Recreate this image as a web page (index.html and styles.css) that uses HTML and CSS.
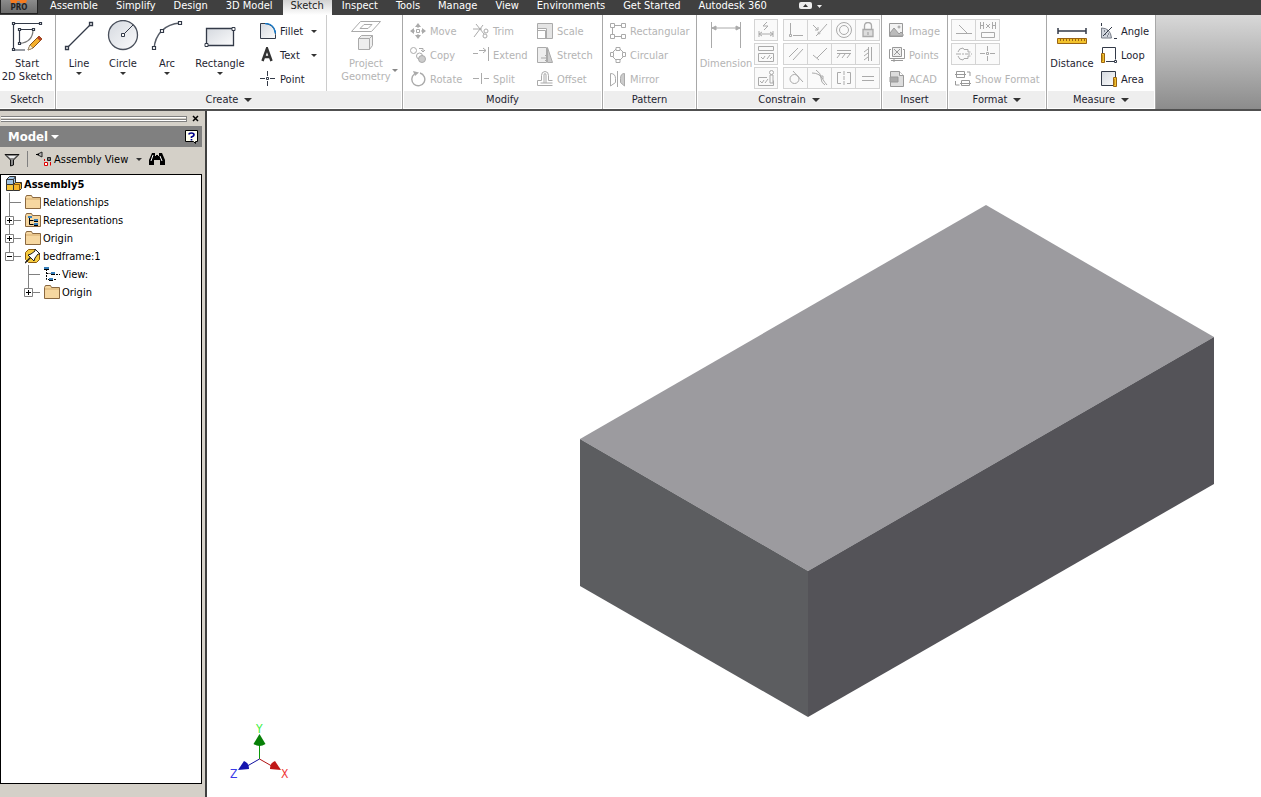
FILE: index.html
```
<!DOCTYPE html>
<html lang="en">
<head>
    <meta charset="UTF-8">
    <meta name="viewport" content="width=device-width, initial-scale=1.0">
    <title>Assembly5</title>
    <link rel="stylesheet" href="styles.css">
</head>
<body>

<nav class="tabs">
    <button class="app-button"><svg width="18" height="4" viewBox="0 0 18 4"><path d="M0 0h17l-1 3h-6v-2H7v2H1z" fill="#f47b20"/></svg>PRO</button>
    <button class="tab">Assemble</button>
    <button class="tab">Simplify</button>
    <button class="tab">Design</button>
    <button class="tab">3D Model</button>
    <button class="tab active">Sketch</button>
    <button class="tab">Inspect</button>
    <button class="tab">Tools</button>
    <button class="tab">Manage</button>
    <button class="tab">View</button>
    <button class="tab">Environments</button>
    <button class="tab">Get Started</button>
    <button class="tab">Autodesk 360</button>
    <button class="collapse" aria-label="Minimize ribbon"><svg width="24" height="8" viewBox="0 0 24 8"><rect width="13" height="7" rx="2" fill="#eee"/><path d="M4 5h5L6.500 2z" fill="#333"/><path d="M18 3h5l-2.500 3z" fill="#eee"/></svg></button>
</nav>

<div class="ribbon">
    <section class="panel panel-sketch">
        <div class="tools">
            <button class="big">
                <svg width="32" height="32" viewBox="0 0 32 32"><g fill="none" stroke="#333a48" stroke-width="1.200"><path d="M29 3.500H2.500V30H14M8.500 24V9.500H22"/><path d="M22 9.500c0 8-4 13-13.500 14" stroke="#777"/><g fill="#fff"><path d="M1.500 2.500h2v2h-2zM28.500 2.500h2v2h-2zM1.500 28.500h2v2h-2zM7.500 8.500h2v2h-2zM21.500 8.500h2v2h-2zM7.500 22.500h2v2h-2z"/></g></g><path d="M17 30l2-5 9-9 3 3-9 9z" fill="#f4b02c" stroke="#8b5315"/><path d="M26 18l2-2 3 3-2 2z" fill="#b4432a"/><path d="M17 30l2-5 3 3z" fill="#fff0c8" stroke="#777" stroke-width=".5"/></svg>
                <span>Start<br>2D Sketch</span>
            </button>
        </div>
        <h2>Sketch</h2>
    </section>

    <section class="panel panel-create">
        <div class="tools">
            <button class="big narrow">
                <svg width="32" height="32" viewBox="0 0 32 32"><g fill="#fff" stroke="#333a48" stroke-width="1.300"><path d="M4 28L28 4"/><path d="M2.500 26.500h3v3h-3zM26.500 2.500h3v3h-3z"/></g></svg>
                <span>Line</span><i class="arrow"></i>
            </button>
            <button class="big narrow">
                <svg width="32" height="32" viewBox="0 0 32 32"><defs><linearGradient id="shade" x2="1" y2="1"><stop stop-color="#d5d9df"/><stop offset="1" stop-color="#fbfbfc"/></linearGradient></defs><circle cx="16" cy="15" r="14.500" fill="url(#shade)" stroke="#4a505c" stroke-width="1.300"/><path d="M17 14l9-9" stroke="#333a48"/><path d="M14.500 13.500h3v3h-3z" fill="#fff" stroke="#333a48"/></svg>
                <span>Circle</span><i class="arrow"></i>
            </button>
            <button class="big narrow">
                <svg width="32" height="32" viewBox="0 0 32 32"><path d="M3 29C4 14 14 4 29 3" fill="none" stroke="#555b66" stroke-width="1.500"/><g fill="#fff" stroke="#333a48" stroke-width="1.200"><path d="M1.500 26.500h3v3h-3zM9.500 9.500h3v3h-3zM27.500 1.500h3v3h-3z"/></g></svg>
                <span>Arc</span><i class="arrow"></i>
            </button>
            <button class="big wide">
                <svg width="32" height="32" viewBox="0 0 32 32"><path d="M2.500 8.500h27v17h-27z" fill="url(#shade)" stroke="#333a48" stroke-width="1.300"/><path d="M1 23.500h3v3H1zM28 7.500h3v3h-3z" fill="#fff" stroke="#333a48"/></svg>
                <span>Rectangle</span><i class="arrow"></i>
            </button>
            <div class="stack stack-draw">
                <button class="small"><svg width="16" height="16" viewBox="0 0 16 16"><path d="M.500.500h5c6 1 10 5 10 11v4H.500z" fill="url(#shade)" stroke="#333a48"/><path d="M5 .500c6 0 10 4 10.500 10" fill="none" stroke="#1578c8" stroke-width="1.500"/></svg><span>Fillet</span><i class="arrow"></i></button>
                <button class="small"><svg width="16" height="16" viewBox="0 0 16 16"><path d="M2.500 14L7 1.500 11.500 14M4.500 10h6" fill="none" stroke="#333" stroke-width="2.500"/></svg><span>Text</span><i class="arrow"></i></button>
                <button class="small"><svg width="16" height="16" viewBox="0 0 16 16"><path d="M7.500 0v5M7.500 10v5M0 7.500h5M10 7.500h5M6.500 6.500h2v2h-2z" fill="none" stroke="#333a48"/></svg><span>Point</span></button>
            </div>
            <div class="project">
                <button class="big" disabled>
                    <svg width="32" height="32" viewBox="0 0 32 32" fill="none" stroke="#aaa"><path d="M1.500 11.500l9-10h20l-9 10zM10 8.500l4-4h8l-4 4z"/><path d="M8.500 18.500l3-3h11v10l-3 4h-11z" fill="#eee"/><path d="M8.500 18.500h11l3-3M19.500 18.500v11"/></svg>
                    <span>Project<br>Geometry</span>
                </button>
                <i class="arrow"></i>
            </div>
        </div>
        <h2>Create <i class="arrow large"></i></h2>
    </section>

    <section class="panel panel-modify">
        <div class="tools">
            <div class="stack">
                <button class="small" disabled><svg width="16" height="16" viewBox="0 0 16 16" fill="none" stroke="#aaa"><path d="M6.500 6.500h3v3h-3zM8 2v3M8 11v3M2 8h3M11 8h3"/><path d="M5 4l3-4 3 4zM5 12l3 4 3-4zM4 5L0 8l4 3zM12 5l4 3-4 3z" fill="#aaa" stroke="none"/></svg><span>Move</span></button>
                <button class="small" disabled><svg width="16" height="16" viewBox="0 0 16 16" fill="none" stroke="#aaa"><circle cx="3.500" cy="3.500" r="3"/><circle cx="9.500" cy="9" r="3"/><circle cx="12" cy="12" r="3.500" fill="#ccc"/><path d="M9 1.500h4V5M11 3l2 2 2-2"/></svg><span>Copy</span></button>
                <button class="small" disabled><svg width="16" height="16" viewBox="0 0 16 16" fill="none" stroke="#aaa" stroke-width="1.400"><path d="M4.500 3A6.500 6.500 0 1 0 10 2"/><path d="M3 0l6 1.500L5 5z" fill="#aaa" stroke="none"/></svg><span>Rotate</span></button>
            </div>
            <div class="stack stack-trim">
                <button class="small" disabled><svg width="16" height="16" viewBox="0 0 16 16" fill="none" stroke="#aaa"><path d="M0 6h9M3 1l8 10M1 14L10 2"/><circle cx="13" cy="8" r="2"/><circle cx="12" cy="13" r="2"/></svg><span>Trim</span></button>
                <button class="small" disabled><svg width="16" height="16" viewBox="0 0 16 16" fill="none" stroke="#aaa"><path d="M0 6.500h5M6 3.500h7M10 1l3 2.500L10 6M15.500 0v14"/></svg><span>Extend</span></button>
                <button class="small" disabled><svg width="16" height="16" viewBox="0 0 16 16" fill="none" stroke="#aaa"><path d="M0 7.500h6M8.500 2v11M11 7.500h5"/></svg><span>Split</span></button>
            </div>
            <div class="stack stack-scale">
                <button class="small" disabled><svg width="16" height="16" viewBox="0 0 16 16" fill="none" stroke="#aaa"><path d="M.500.500h15v15H.500zM.500 5.500h9v10"/><path d="M1 1h14v14h-5V5H1z" fill="#e4e4e4" stroke="none"/><path d="M.500 7.500h8v8h-8z"/></svg><span>Scale</span></button>
                <button class="small" disabled><svg width="16" height="16" viewBox="0 0 16 16" stroke="#aaa"><path d="M10.500.500l5 15h-5z" fill="#ccc"/><path d="M.500.500h9v15h-9z" fill="#eee"/><path d="M4 11h7M8 8l3 3-3 3" fill="none"/></svg><span>Stretch</span></button>
                <button class="small" disabled><svg width="16" height="16" viewBox="0 0 16 16" fill="none" stroke="#aaa"><path d="M15.500 14.500H.500V9.500h4v-5q0-4 3.500-4t3.500 4v5h4M15.500 12H3.500M7 12V4q0-1.500 1-1.500T9 4v8"/></svg><span>Offset</span></button>
            </div>
        </div>
        <h2>Modify</h2>
    </section>

    <section class="panel panel-pattern">
        <div class="tools">
            <div class="stack">
                <button class="small" disabled><svg width="16" height="16" viewBox="0 0 16 16" fill="none" stroke="#aaa"><path d="M.500.500h4v4h-4zM11.500.500h4v4h-4zM.500 11.500h4v4h-4zM11.500 11.500h4v4h-4zM5 2.500h6M2.500 5v6M5 13.500h6"/></svg><span>Rectangular</span></button>
                <button class="small" disabled><svg width="16" height="16" viewBox="0 0 16 16" fill="none" stroke="#aaa"><path d="M6 .500h4v3H6zM6 12.500h4v3H6zM.500 5.500h3v4h-3zM12.500 5.500h3v4h-3zM3 5l3-3M10 2l3 3M3 10l3 3M13 10l-3 3"/></svg><span>Circular</span></button>
                <button class="small" disabled><svg width="16" height="16" viewBox="0 0 16 16" stroke="#aaa"><path d="M.500 15V2.500q5 0 5 5v4L.500 15" fill="none"/><path d="M14.500 15V2.500q-4 0-4 5v4l4 3.500" fill="#ccc"/><path d="M7.500 0v16"/></svg><span>Mirror</span></button>
            </div>
        </div>
        <h2>Pattern</h2>
    </section>

    <section class="panel panel-constrain">
        <div class="tools">
            <button class="big dimension" disabled>
                <svg width="32" height="32" viewBox="0 0 32 32" stroke="#aaa" fill="#aaa"><path d="M1.500 2v26M30.500 2v26M2 8h28"/><path d="M2 8l4-2v4zM30 8l-4-2v4z"/></svg>
                <span>Dimension</span>
            </button>
            <div class="cells one">
                <button disabled aria-label="Automatic dimensions"><svg width="16" height="16" viewBox="0 0 16 16" fill="none" stroke="#aaa"><path d="M1 9v6M15 9v6M1 12h14M4 10l-3 2 3 2M12 10l3 2-3 2M9 0L5 4h5L6 8"/></svg></button>
                <button disabled aria-label="Show constraints"><svg width="16" height="16" viewBox="0 0 16 16" fill="none" stroke="#aaa"><path d="M.500.500h15v4H.500zM.500 7.500h15v8H.500zM3 11l2 2 2-3M9 13l3-4M12 13l2-2"/></svg></button>
                <button disabled aria-label="Constraint settings"><svg width="16" height="16" viewBox="0 0 16 16" fill="none" stroke="#aaa"><path d="M9 7.500H.500v8h15v-5M2 11l2 2 2-3M7 13l3-4M12 13V5h3v8z"/><circle cx="13.500" cy="2.500" r="2"/></svg></button>
            </div>
            <div class="cells four">
                <button disabled aria-label="Coincident"><svg width="16" height="16" viewBox="0 0 16 16" fill="none" stroke="#aaa"><path d="M2.500 1v11M5 13.500h10M1.500 12.500h2v2h-2z"/></svg></button>
                <button disabled aria-label="Collinear"><svg width="16" height="16" viewBox="0 0 16 16" fill="none" stroke="#aaa"><path d="M1 3l5 5M6 5v3H3M4 14l3-3M8 10l7-8"/><circle cx="7" cy="11" r="1"/></svg></button>
                <button disabled aria-label="Concentric"><svg width="16" height="16" viewBox="0 0 16 16" fill="none" stroke="#aaa"><circle cx="8" cy="8" r="7.500"/><circle cx="8" cy="8" r="4.500"/></svg></button>
                <button disabled aria-label="Fix"><svg width="16" height="16" viewBox="0 0 16 16" fill="none" stroke="#aaa" stroke-width="1.300"><path d="M4.500 7V4q0-3.500 3.500-3.500T11.500 4v3"/><path d="M3 7.500h10v7H3z" fill="#ddd"/><path d="M8 10v3"/></svg></button>
                <button disabled aria-label="Parallel"><svg width="16" height="16" viewBox="0 0 16 16" stroke="#aaa"><path d="M1 11L10 2M5 14L15 3"/></svg></button>
                <button disabled aria-label="Perpendicular"><svg width="16" height="16" viewBox="0 0 16 16" stroke="#aaa" fill="none"><path d="M1 9l6 5M5 12L15 2"/></svg></button>
                <button disabled aria-label="Horizontal"><svg width="16" height="16" viewBox="0 0 16 16" stroke="#aaa"><path d="M1 4.500h14M1 7.500h14M4 8l-3 4M9 8l-3 4M14 8l-3 4"/></svg></button>
                <button disabled aria-label="Vertical"><svg width="16" height="16" viewBox="0 0 16 16" stroke="#aaa"><path d="M8.500 1v14M11.500 1v14M8 3L4 6M8 7l-4 3M8 11l-4 3"/></svg></button>
                <button disabled aria-label="Tangent"><svg width="16" height="16" viewBox="0 0 16 16" fill="none" stroke="#aaa"><circle cx="6.500" cy="9" r="4.500"/><path d="M5 1l10 11"/></svg></button>
                <button disabled aria-label="Smooth"><svg width="16" height="16" viewBox="0 0 16 16" fill="none" stroke="#aaa"><path d="M0 3q7 0 10 5t5 7M4 0q5 3 5 8t4 7M8 6h3v3"/></svg></button>
                <button disabled aria-label="Symmetric"><svg width="16" height="16" viewBox="0 0 16 16" fill="none" stroke="#aaa"><path d="M5 2.500H1.500v11H5M11 2.500h3.500v11H11"/><path d="M8 1v14" stroke-dasharray="4 1"/></svg></button>
                <button disabled aria-label="Equal"><svg width="16" height="16" viewBox="0 0 16 16" stroke="#aaa"><path d="M2 6.500h12M2 10.500h12"/></svg></button>
            </div>
        </div>
        <h2>Constrain <i class="arrow large"></i></h2>
    </section>

    <section class="panel panel-insert">
        <div class="tools">
            <div class="stack">
                <button class="small" disabled><svg width="16" height="16" viewBox="0 0 16 16" stroke="#999"><path d="M.500.500h13v13H.500z" fill="#f2f2f2"/><path d="M1 10l4-5 5 6 2-2 2 2v2H1z" fill="#bbb"/><circle cx="10" cy="4" r="1" fill="none"/></svg><span>Image</span></button>
                <button class="small" disabled><svg width="16" height="16" viewBox="0 0 16 16" fill="none" stroke="#999"><path d="M3.500.500h9v9h-9z" fill="#eee"/><path d="M5 2l6 6M11 2L5 8M2 2.500H.500v9h15v-9H14M2 13.500h12M5 11v4"/></svg><span>Points</span></button>
                <button class="small" disabled><svg width="16" height="16" viewBox="0 0 16 16" stroke="#999"><path d="M1.500.500h9l4 4v11h-13z" fill="#ddd"/><path d="M10.500.500v4h4" fill="#fff"/><path d="M1 6h8v5H1z" fill="#aaa"/></svg><span>ACAD</span></button>
            </div>
        </div>
        <h2>Insert</h2>
    </section>

    <section class="panel panel-format">
        <div class="tools column">
            <div class="cells two">
                <button disabled aria-label="Construction"><svg width="16" height="16" viewBox="0 0 16 16" stroke="#aaa"><path d="M3 3l8 8M0 11.500h16"/></svg></button>
                <button disabled aria-label="Driven dimension"><svg width="16" height="16" viewBox="0 0 16 16" fill="none" stroke="#aaa"><path d="M.500 0v7M3.500 0v7M.500 3.500h3M12.500 0v7M15.500 0v7M12.500 3.500h3M6 2l4 4M10 2L6 6M1.500 10.500h13v5h-13z"/></svg></button>
                <button disabled aria-label="Centerline"><svg width="16" height="16" viewBox="0 0 16 16" fill="none" stroke="#aaa"><path d="M2 6q1-4 5-4l1 1.500h4V6h2.500M2 10q1 4 5 4l1-1.500h4V10h2.500"/><path d="M0 8h16" stroke-dasharray="5 1 2 1"/></svg></button>
                <button disabled aria-label="Center point"><svg width="16" height="16" viewBox="0 0 16 16" fill="none" stroke="#aaa"><path d="M7.500 0v5M7.500 10v5M0 7.500h5M10 7.500h5M6.500 6.500h2v2h-2z"/></svg></button>
            </div>
            <button class="small" disabled><svg width="16" height="16" viewBox="0 0 16 16" fill="none" stroke="#999"><path d="M1.500.500h8v6h-8zM6.500 9.500h8v5h-8zM0 3.500h11M5 12.500h11M12 1h3v4M.500 10v4h4"/></svg><span>Show Format</span></button>
        </div>
        <h2>Format <i class="arrow large"></i></h2>
    </section>

    <section class="panel panel-measure">
        <div class="tools">
            <button class="big distance">
                <svg width="32" height="32" viewBox="0 0 32 32"><path d="M2 8v6M30 8v6M2 11h28" stroke="#333a48" stroke-width="1.500"/><path d="M1.500 18.500h29v5h-29z" fill="#f2c22c" stroke="#9a6412"/><path d="M4.500 19v2M7.500 19v2M10.500 19v2M13.500 19v2M16.500 19v2M19.500 19v2M22.500 19v2M25.500 19v2M28.500 19v2" stroke="#9a6412"/></svg>
                <span>Distance</span>
            </button>
            <div class="stack stack-measure">
                <button class="small"><svg width="16" height="16" viewBox="0 0 16 16"><path d="M.500 5q9 0 10 10h-10z" fill="#d0d4dc" stroke="#777d88"/><path d="M.500 0v3M13 15.500h3M2 13L11 4" stroke="#333a48"/><path d="M3 8h1M6 8h1M4 11h1M7 11h1M6 13h1" stroke="#333a48"/></svg><span>Angle</span></button>
                <button class="small"><svg width="16" height="16" viewBox="0 0 16 16"><path d="M1.500 6V.500h13v12M5 14.500h8" fill="none" stroke="#333a48"/><path d="M13.500 13.500h2v2h-2z" fill="#fff" stroke="#333a48"/><path d="M.500 6.500h3v9h-3z" fill="#f2c22c" stroke="#9a6412"/><path d="M1 9h1M1 11h1M1 13h1" stroke="#9a6412"/></svg><span>Loop</span></button>
                <button class="small"><svg width="16" height="16" viewBox="0 0 16 16"><path d="M.500.500h14v14H.500z" fill="url(#shade)" stroke="#333a48"/><path d="M12.500 6.500h3v9h-3z" fill="#f2c22c" stroke="#9a6412"/><path d="M13 9h1M13 11h1M13 13h1" stroke="#9a6412"/></svg><span>Area</span></button>
            </div>
        </div>
        <h2>Measure <i class="arrow large"></i></h2>
    </section>
</div>

<main class="workspace">
    <aside class="browser">
        <div class="grip"><span></span><button aria-label="Close"><svg width="7" height="7" viewBox="0 0 7 7"><path d="M1 1l5 5M6 1L1 6" stroke="#000" stroke-width="1.500"/></svg></button></div>
        <div class="browser-title">
            <button class="model">Model <i class="arrow large"></i></button>
            <button class="help" aria-label="Help"><svg width="13" height="14" viewBox="0 0 13 14"><path d="M.500.500h12v11h-2v2l-2-2h-8z" fill="#fffff0" stroke="#000"/><path d="M4 4.500Q4 3 6.500 3T9 5Q9 6 6.500 7v1M6.500 9v1.500" fill="none" stroke="#00008b" stroke-width="1.700"/></svg></button>
        </div>
        <div class="browser-tools">
            <button aria-label="Filter"><svg width="16" height="15" viewBox="0 0 16 15"><path d="M1 2.500h14L9.500 8v5l-3 1V8z" fill="#888" stroke="#111"/><path d="M4 4h8l-2 2H6z" fill="#eee"/></svg></button>
            <button class="view-mode"><svg width="16" height="16" viewBox="0 0 16 16"><path d="M1 3.500L6 1v5z" fill="#bbb" stroke="#222"/><path d="M0 3h3v1H0z"/><path d="M11.500 6.500h3v3h-3z" fill="#777" stroke="#222"/><path d="M8.500 11.500h3v3h-3z" fill="#fff" stroke="#d00"/><path d="M8.500 10V8M14.500 11v3.500" fill="none" stroke="#d00"/></svg><span>Assembly View</span><i class="arrow"></i></button>
            <button aria-label="Find"><svg width="16" height="14" viewBox="0 0 16 14"><path d="M3 1h3v3h1V3h2v1h1V1h3l3 7v5h-5V8H5v5H0V8z"/><path d="M4 3L2 9M11 4l2 5" stroke="#fff"/></svg></button>
        </div>
        <div class="tree">
            <div class="node root"><svg width="16" height="16" viewBox="0 0 16 16" stroke="#333"><path d="M.500 3.500l3-3h6v6l-2 3h-7z" fill="#9fc3e4"/><path d="M.500 3.500h7v6M7.500 3.500l2-3" fill="none"/><path d="M.500 8.500h7v6h-7z" fill="#f5c53a"/><path d="M7.500 8.500l2-2h6v6l-2 2h-6z" fill="#f5b52a"/><path d="M7.500 8.500h6v6M13.500 8.500l2-2" fill="none" stroke="#8a5a10"/></svg><span>Assembly5</span></div>
            <ul>
                <li>
                    <div class="node"><svg class="branch" width="20" height="18" viewBox="0 0 20 18"><path d="M4.500 0v18M4.500 9.500H16"/></svg><svg width="16" height="16" viewBox="0 0 16 16"><path d="M.500 3.500l1-2h5l1 2h8v11H.500z" fill="#f6d7a0" stroke="#8a6840"/><path d="M1 5h14" stroke="#d5ad70"/></svg><span>Relationships</span></div>
                </li>
                <li>
                    <div class="node"><svg class="branch" width="20" height="18" viewBox="0 0 20 18"><path d="M4.500 0v18M4.500 9.500H16"/><path class="box" d="M.500 5.500h8v8h-8z"/><path class="sign" d="M2 9.500h5M4.500 7v5"/></svg><svg width="16" height="16" viewBox="0 0 16 16"><path d="M.500 3.500l1-2h5l1 2h8v11H.500z" fill="#f6d7a0" stroke="#8a6840"/><path d="M4.500 6v6.500h4M4.500 8.500h4" fill="none" stroke="#000"/><path d="M3 4h4v2H3zM9 7h4v2H9zM9 11h4v2H9z" fill="#357fbd"/><path d="M9 9.500h4M9 13.500h4" stroke="#000"/></svg><span>Representations</span></div>
                </li>
                <li>
                    <div class="node"><svg class="branch" width="20" height="18" viewBox="0 0 20 18"><path d="M4.500 0v18M4.500 9.500H16"/><path class="box" d="M.500 5.500h8v8h-8z"/><path class="sign" d="M2 9.500h5M4.500 7v5"/></svg><svg width="16" height="16" viewBox="0 0 16 16"><path d="M.500 3.500l1-2h5l1 2h8v11H.500z" fill="#f6d7a0" stroke="#8a6840"/><path d="M1 5h14" stroke="#d5ad70"/></svg><span>Origin</span></div>
                </li>
                <li>
                    <div class="node"><svg class="branch" width="20" height="18" viewBox="0 0 20 18"><path d="M4.500 0v9M4.500 9.500H16"/><path class="box" d="M.500 5.500h8v8h-8z"/><path class="sign" d="M2 9.500h5"/></svg><svg width="16" height="16" viewBox="0 0 16 16" stroke="#222"><path d="M.500 4.500l3-3h7l4 4v6l-3 3h-8l-3-3z" fill="#f7cc3e" stroke="#8a5a10"/><path d="M0 15l6-6" stroke-width="1.500"/><path d="M3 7l3-1 4-3V1l5 5h-2l-3 4-1 3z" fill="#fff"/></svg><span>bedframe:1</span></div>
                    <ul>
                        <li>
                            <div class="node"><svg class="branch" width="20" height="18" viewBox="0 0 20 18"><path d="M4.500 0v18M4.500 9.500H16"/></svg><svg width="16" height="16" viewBox="0 0 16 16"><path d="M2.500 3v10.500h3M2.500 7.500h4M12 8.500h4M10 13.500h2" fill="none" stroke="#000" stroke-dasharray="2 1"/><path d="M0 1h5v2H0zM7 6h4v2H7zM5 12h4v2H5z" fill="#357fbd"/><path d="M0 3.500h5M7 8.500h4M5 14.500h4" stroke="#000"/></svg><span>View:</span></div>
                        </li>
                        <li>
                            <div class="node"><svg class="branch" width="20" height="18" viewBox="0 0 20 18"><path d="M4.500 0v9M4.500 9.500H16"/><path class="box" d="M.500 5.500h8v8h-8z"/><path class="sign" d="M2 9.500h5M4.500 7v5"/></svg><svg width="16" height="16" viewBox="0 0 16 16"><path d="M.500 3.500l1-2h5l1 2h8v11H.500z" fill="#f6d7a0" stroke="#8a6840"/><path d="M1 5h14" stroke="#d5ad70"/></svg><span>Origin</span></div>
                        </li>
                    </ul>
                </li>
            </ul>
        </div>
    </aside>

    <div class="viewport">
        <svg class="model-view" viewBox="0 0 1054 686">
            <path d="M779 94l228 132-406 234-228-132z" fill="#9c9b9f"/>
            <path d="M373 328l228 132v146L373 475z" fill="#5c5d60"/>
            <path d="M1007 226v147L601 606V460z" fill="#545358"/>
        </svg>
        <svg class="triad" width="64" height="64" viewBox="0 0 64 64">
            <path d="M31.500 38V20" stroke="#0a9a0a"/>
            <path d="M31.500 38l-14 8" stroke="#1010a0"/>
            <path d="M31.500 38l14 8" stroke="#b01010"/>
            <path d="M31.500 13l6 10q-6 4-12 0z" fill="#078007"/>
            <path d="M10 49l6-9q5 2 5 8z" fill="#1515ae"/>
            <path d="M53 49l-6-9q-5 2-5 8z" fill="#c01818"/>
            <text x="28" y="12" fill="#3cf03c">Y</text>
            <text x="2" y="57" fill="#3a3ae8">Z</text>
            <text x="53" y="57" fill="#f03a3a">X</text>
        </svg>
    </div>
</main>

</body>
</html>
```
FILE: styles.css
```
* {
    box-sizing: border-box;
}
body {
    margin: 0;
    height: 100vh;
    display: flex;
    flex-direction: column;
    overflow: hidden;
    font-family: "DejaVu Sans Condensed", "Noto Sans", sans-serif;
    font-size: 11px;
    line-height: 13px;
    color: #1e2430;
    background-color: #ffffff;
}
button {
    font: inherit;
    color: inherit;
    background: none;
    border: none;
    padding: 0;
    margin: 0;
}
svg {
    display: block;
    flex: none;
}
.arrow {
    display: inline-block;
    flex: none;
    border: 3px solid transparent;
    border-top-color: #333;
    border-bottom: none;
}
.arrow.large {
    border-width: 4px;
    border-bottom: none;
}

/* Tabs */
.tabs {
    display: flex;
    flex: none;
    height: 15px;
    background-color: #404040;
    color: #ffffff;
}
.app-button {
    width: 38px;
    height: 14px;
    margin-right: 4px;
    display: flex;
    flex-direction: column;
    align-items: center;
    font-size: 8px;
    line-height: 8px;
    font-weight: bold;
    color: #222;
    background: linear-gradient(#8c8c8c, #6c6c6c);
    border: 1px solid #222;
    border-top: none;
}
.tab {
    height: 15px;
    padding: 0 8px 4px;
    margin-right: 2px;
    line-height: 11px;
    white-space: nowrap;
}
.tab.active {
    color: #222;
    background: linear-gradient(#d2d2d2, #ffffff);
}
.collapse {
    margin-left: 22px;
    padding-bottom: 4px;
}

/* Ribbon */
.ribbon {
    display: flex;
    flex: none;
    height: 96px;
    border-bottom: 2px solid #505050;
    background: linear-gradient(#d8d8d8, #8c8c8c);
}
.panel {
    display: flex;
    flex-direction: column;
    flex: none;
    border-right: 1px solid #a8a8a8;
    padding: 0 1px 1px;
    background-color: #ffffff;
}
.panel h2 {
    display: flex;
    align-items: center;
    justify-content: center;
    gap: 6px;
    margin: 0;
    height: 17px;
    font-size: 11px;
    font-weight: normal;
    background-color: #eeeeee;
}
.tools {
    display: flex;
    flex: 1;
    padding-top: 4px;
}
.tools.column {
    flex-direction: column;
}
.panel-sketch { width: 56px; padding-left: 0; }
.panel-create { width: 347px; }
.panel-modify { width: 200px; }
.panel-pattern { width: 94px; }
.panel-constrain { width: 185px; }
.panel-insert { width: 66px; }
.panel-format { width: 99px; }
.panel-measure { width: 109px; }

.big {
    display: flex;
    flex-direction: column;
    align-items: center;
    width: 100%;
    padding-top: 1px;
    white-space: nowrap;
}
.big svg {
    margin-bottom: 5px;
}
.big .arrow {
    margin-top: 2px;
}
.narrow {
    width: 44px;
}
.wide {
    width: 62px;
}
.big.dimension {
    width: 56px;
}
.big.distance {
    width: 48px;
}
.stack {
    padding-left: 6px;
}
.stack-draw {
    width: 75px;
    padding-left: 9px;
}
.panel-modify .stack {
    width: 70px;
}
.panel-modify .stack-trim,
.panel-modify .stack-scale {
    width: 65px;
    padding-left: 0;
}
.stack-measure {
    padding-left: 5px;
}
.small {
    display: flex;
    align-items: center;
    gap: 4px;
    height: 24px;
    white-space: nowrap;
}
.stack-draw .small {
    width: 100%;
}
.stack-draw .arrow {
    margin-left: auto;
    margin-right: 9px;
}
.project {
    display: flex;
    flex: 1;
    margin-top: -4px;
    padding: 4px 3px 0 10px;
    border-left: 1px solid #cccccc;
}
.project .arrow {
    margin-top: 50px;
    margin-left: -3px;
    border-top-color: #888;
}
.big:disabled,
.small:disabled {
    color: #b4b4b4;
}
.cells {
    display: grid;
    align-content: start;
    grid-auto-rows: 22px;
    row-gap: 2px;
}
.cells button {
    display: flex;
    align-items: center;
    justify-content: center;
    border: 1px solid #d4d4d4;
    margin-right: -1px;
    background-color: #fafafa;
}
.cells.one {
    grid-template-columns: 23px;
    margin-right: 6px;
}
.cells.four {
    grid-template-columns: repeat(4, 24px);
}
.cells.two {
    grid-template-columns: repeat(2, 24px);
    margin-left: 2px;
    height: 48px;
}
.column .small {
    padding-left: 6px;
}

/* Browser */
.workspace {
    display: flex;
    flex: 1;
    min-height: 0;
}
.browser {
    display: flex;
    flex-direction: column;
    flex: none;
    width: 207px;
    padding: 0 3px 13px 0;
    color: #000;
    background-color: #d4d0c8;
    border-right: 2px solid #404040;
}
.grip {
    display: flex;
    align-items: center;
    gap: 5px;
    height: 15px;
    padding: 0 3px 0 1px;
}
.grip span {
    flex: 1;
    height: 6px;
    border: 1px solid #808080;
    border-width: 1px 1px 1px 0;
    background: linear-gradient(#ffffff 1px, #d4d0c8 1px 2px, #808080 2px 3px, #ffffff 3px);
}
.browser-title {
    display: flex;
    align-items: center;
    justify-content: space-between;
    height: 21px;
    padding: 0 4px 0 8px;
    color: #ffffff;
    background-color: #808080;
}
.model {
    display: flex;
    align-items: center;
    gap: 3px;
    font-size: 13px;
    font-weight: bold;
}
.model .arrow {
    border-top-color: #ffffff;
}
.browser-tools {
    display: flex;
    align-items: center;
    gap: 7px;
    height: 27px;
    padding: 0 4px 3px;
}
.view-mode {
    display: flex;
    align-items: center;
    gap: 2px;
    padding-left: 8px;
    border-left: 1px solid #808080;
}
.view-mode .arrow {
    margin-left: 6px;
}
.tree {
    flex: 1;
    border: 1px solid #000;
    background-color: #ffffff;
}
.tree ul {
    list-style: none;
    margin: 0;
    padding: 0 0 0 4px;
}
.tree ul ul {
    padding-left: 19px;
}
.node {
    display: flex;
    align-items: center;
    height: 18px;
    white-space: nowrap;
}
.node span {
    margin-left: 2px;
}
.root {
    padding-left: 5px;
    font-weight: bold;
}
.branch {
    fill: none;
    stroke: #808080;
}
.branch .box {
    fill: #ffffff;
}
.branch .sign {
    stroke: #000;
}

/* Viewport */
.viewport {
    position: relative;
    flex: 1;
    min-width: 0;
}
.model-view {
    width: 100%;
    height: 100%;
}
.triad {
    position: absolute;
    left: 21px;
    bottom: 12px;
    font-size: 12px;
}
```
